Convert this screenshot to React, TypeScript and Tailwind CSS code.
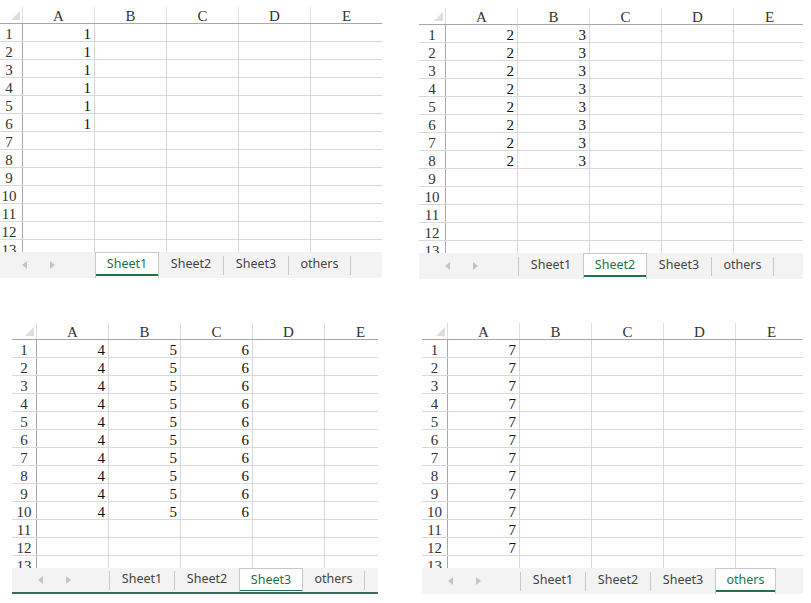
import React from "react";

const COLS = ["A", "B", "C", "D", "E"];
const TABS = ["Sheet1", "Sheet2", "Sheet3", "others"];

type SheetProps = {
  wrap: string; // outer sizing/offset
  rh: string; // row header width class
  lead: string; // width of arrow area (row header + col A)
  data: (number | null)[][]; // rows x cols
  active: number;
  underline?: boolean;
};

function Arrows() {
  return (
    <div className="flex items-center gap-[23px] pl-[26px]">
      <svg width="5" height="8" viewBox="0 0 5 8">
        <path d="M5 0 L0 4 L5 8 Z" fill="#c4c4c4" />
      </svg>
      <svg width="5" height="8" viewBox="0 0 5 8">
        <path d="M0 0 L5 4 L0 8 Z" fill="#c4c4c4" />
      </svg>
    </div>
  );
}

function Sep() {
  return <span className="h-[19px] w-px shrink-0 self-center bg-[#c8c8c8]" />;
}

function Sheet({ wrap, rh, lead, data, active, underline }: SheetProps) {
  const rows = Array.from({ length: 13 }, (_, i) => i + 1);

  const tabItems: React.ReactNode[] = [];
  TABS.forEach((t, i) => {
    const isActive = i === active;
    const prevActive = i - 1 === active;
    if (!isActive && !prevActive) tabItems.push(<Sep key={`s${i}`} />);
    tabItems.push(
      <div
        key={t}
        className={`flex h-full shrink-0 flex-col ${
          t === "others" ? "w-[61px]" : "w-[64px]"
        } ${isActive ? "border-x border-t border-[#c8c8c8] bg-white" : ""}`}
      >
        <span
          className={`flex flex-1 items-center justify-center pt-[2px] ${
            isActive ? "text-[#217346]" : "text-[#444]"
          }`}
        >
          {t}
        </span>
        <span
          className={`mb-[2px] h-[2px] ${isActive ? "bg-[#217346]" : ""}`}
        />
      </div>
    );
  });
  if (active !== TABS.length - 1) tabItems.push(<Sep key="end" />);

  return (
    <div className={`flex flex-col overflow-hidden ${wrap}`}>
      {/* column headers */}
      <div className="flex h-[17px] shrink-0 border-b border-[#a8a8a8] font-['Liberation_Serif',serif] text-[15px] leading-[19px] text-[#333]">
        <div className={`flex shrink-0 items-end justify-end border-r border-[#dcdcdc] pb-[3px] pr-[2px] ${rh}`}>
          <svg width="9" height="9" viewBox="0 0 9 9">
            <path d="M9 0 L9 9 L0 9 Z" fill="#dedede" />
          </svg>
        </div>
        {COLS.map((c) => (
          <div
            key={c}
            className="h-full w-[72px] shrink-0 overflow-hidden border-r border-[#e0e0e0] text-center"
          >
            {c}
          </div>
        ))}
      </div>

      {/* grid */}
      <div className="h-[228px] shrink-0 overflow-hidden font-['Liberation_Serif',serif] text-[15px] text-[#111]">
        {rows.map((r) => (
          <div key={r} className="flex h-[18px] overflow-hidden border-b border-[#d9d9d9] leading-[20px]">
            <div
              className={`shrink-0 border-r border-[#a8a8a8] text-center text-[#333] ${rh}`}
            >
              {r}
            </div>
            {COLS.map((c, ci) => {
              const v = data[r - 1]?.[ci];
              return (
                <div
                  key={c}
                  className="w-[72px] shrink-0 border-r border-[#d9d9d9] pr-[3px] text-right"
                >
                  {v ?? ""}
                </div>
              );
            })}
          </div>
        ))}
      </div>

      {/* sheet tabs */}
      <div
        className={`flex h-[26px] shrink-0 bg-[#f3f3f3] font-['Noto_Sans',sans-serif] text-[12.5px] ${
          underline ? "border-b-2 border-[#3f6b55]" : ""
        }`}
      >
        <div className={`flex shrink-0 items-center ${lead}`}>
          <Arrows />
        </div>
        {tabItems}
      </div>
    </div>
  );
}

function fill(n: number, vals: number[]) {
  return Array.from({ length: n }, () => vals);
}

export default function App() {
  return (
    <div className="h-[603px] w-[811px] overflow-hidden bg-white">
      <div className="flex h-[323px] items-start">
        <Sheet
          wrap="-ml-[4px] mt-[7px] w-[386px]"
          rh="w-[27px]"
          lead="w-[99px]"
          data={fill(6, [1])}
          active={0}
        />
        <Sheet
          wrap="ml-[37px] mt-[8px] w-[384px]"
          rh="w-[27px]"
          lead="w-[99px]"
          data={fill(8, [2, 3])}
          active={1}
        />
      </div>
      <div className="flex items-start">
        <Sheet
          wrap="ml-[12px] w-[366px]"
          rh="w-[25px]"
          lead="w-[97px]"
          data={fill(10, [4, 5, 6])}
          active={2}
          underline
        />
        <Sheet
          wrap="ml-[44px] w-[381px]"
          rh="w-[26px]"
          lead="w-[98px]"
          data={fill(12, [7])}
          active={3}
        />
      </div>
    </div>
  );
}
